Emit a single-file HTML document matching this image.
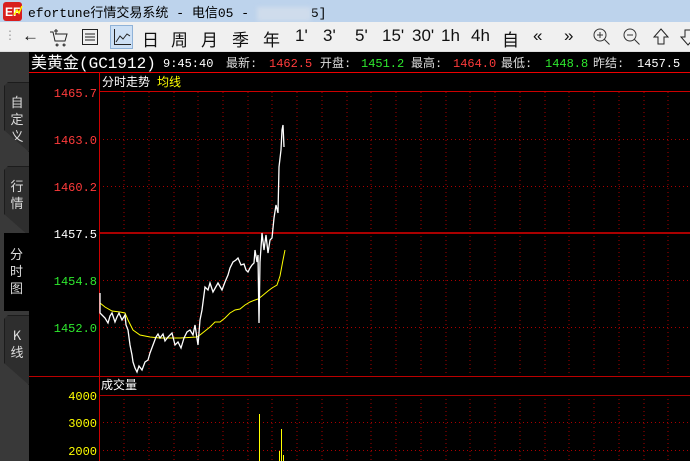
<!DOCTYPE html>
<html style="overflow:hidden;width:690px;height:461px"><head><meta charset="utf-8"><style>
*{margin:0;padding:0;box-sizing:border-box}
body{width:690px;height:461px;overflow:hidden;background:#000;font-family:"Liberation Mono","Noto Sans CJK SC",monospace;position:relative}
#title{position:absolute;left:0;top:0;width:690px;height:22px;background:#bdd3ec;overflow:hidden}
#title .t{position:absolute;left:28px;top:2px;font-size:13px;color:#000;white-space:nowrap}
#tb{position:absolute;left:0;top:22px;width:690px;height:30px;background:#f0f0f0;border-bottom:1px solid #ddd;overflow:hidden}
#tb span{position:absolute;top:4px;font-size:17px;color:#111;font-family:"Liberation Sans","Noto Sans CJK SC",sans-serif}
#side{position:absolute;left:0;top:52px;width:29px;height:409px;background:#393939;overflow:hidden}
.tab{position:absolute;left:4px;width:25px;background:#2e2e2e;border:1px solid #1c1c1c;border-right:none;color:#ddd;font-size:13px;text-align:center;line-height:17px;padding-top:10px;font-family:"Noto Sans CJK SC",sans-serif;clip-path:polygon(0 4px,4px 0,100% 0,100% 100%,0 calc(100% - 22px))}
.tab.act{background:#000;clip-path:none;border:none}
</style></head><body>
<div id="title">
<svg width="22" height="22" style="position:absolute;left:2px;top:1px"><rect x="1" y="1" width="19" height="19" rx="3" fill="#d81e1e"/><text x="3" y="15" font-size="12" fill="#fff" font-family="Liberation Sans" font-weight="bold">EF</text><path d="M12 14 L15 9 L17 12 L20 5" stroke="#ff0" stroke-width="1.5" fill="none"/></svg>
<div class="t">efortune行情交易系统 - 电信05 - <span style="display:inline-block;width:54px;height:14px;background:#cfdcec;filter:blur(2px);vertical-align:middle"></span>5]</div>
</div>
<div id="tb">
<span style="left:4px;top:6px;font-size:12px;color:#999">⋮</span>
<span style="left:22px">←</span>
<svg width="24" height="22" style="position:absolute;left:47px;top:4px" stroke="#222" fill="none"><path d="M3 6h3l2 9h10l2-7H8M10 18a1 1 0 1 0 .1 0M17 18a1 1 0 1 0 .1 0M9 3v5M7 5h4"/></svg>
<svg width="20" height="20" style="position:absolute;left:80px;top:5px" stroke="#222" fill="none"><rect x="2.5" y="2.5" width="15" height="15"/><path d="M5 7h10M5 10h10M5 13h10"/></svg>
<div style="position:absolute;left:110px;top:3px;width:23px;height:24px;background:#cde0f5;border:1px solid #8fb2d8"></div>
<svg width="20" height="20" style="position:absolute;left:112px;top:5px" stroke="#222" fill="none"><path d="M2.5 2v15.5H19M4 15l4-6 3 3 4-5 3 2"/></svg>
<span style="left:142px">日</span><span style="left:171px">周</span><span style="left:201px">月</span><span style="left:232px">季</span><span style="left:263px">年</span>
<span style="left:295px">1'</span><span style="left:323px">3'</span><span style="left:355px">5'</span><span style="left:382px">15'</span><span style="left:412px">30'</span><span style="left:441px">1h</span><span style="left:471px">4h</span><span style="left:502px">自</span>
<span style="left:533px">«</span><span style="left:564px">»</span>
<svg width="20" height="20" style="position:absolute;left:592px;top:5px" stroke="#333" fill="none"><circle cx="8" cy="8" r="6"/><path d="M12.5 12.5l5 5M5 8h6M8 5v6"/></svg>
<svg width="20" height="20" style="position:absolute;left:622px;top:5px" stroke="#333" fill="none"><circle cx="8" cy="8" r="6"/><path d="M12.5 12.5l5 5M5 8h6"/></svg>
<svg width="20" height="20" style="position:absolute;left:651px;top:5px" stroke="#222" fill="none"><path d="M10 2l7 8h-4v7H7v-7H3z"/></svg>
<svg width="20" height="20" style="position:absolute;left:678px;top:5px" stroke="#222" fill="none"><path d="M10 18l7-8h-4V3H7v7H3z"/></svg>
</div>
<div id="side">
<div class="tab" style="top:30px;height:70px">自<br>定<br>义</div>
<div class="tab" style="top:114px;height:70px">行<br>情</div>
<div class="tab act" style="top:181px;height:78px;padding-top:12px">分<br>时<br>图</div>
<div class="tab" style="top:263px;height:70px">K<br>线</div>
</div>
<svg width="661" height="409" style="position:absolute;left:29px;top:52px;display:block" font-family="Liberation Mono,Noto Sans CJK SC,monospace">
<g transform="translate(-29,-52)">
<g font-size="12">
<text x="31" y="68" font-size="16" fill="#fff">美黄金(GC1912)</text>
<text x="163" y="67" fill="#fff">9:45:40</text>
<text x="226" y="67" fill="#ddd">最新:</text><text x="269" y="67" fill="#ff3b3b">1462.5</text>
<text x="320" y="67" fill="#ddd">开盘:</text><text x="361" y="67" fill="#2ee82e">1451.2</text>
<text x="411" y="67" fill="#ddd">最高:</text><text x="453" y="67" fill="#ff3b3b">1464.0</text>
<text x="501" y="67" fill="#ddd">最低:</text><text x="545" y="67" fill="#2ee82e">1448.8</text>
<text x="593" y="67" fill="#ddd">昨结:</text><text x="637" y="67" fill="#fff">1457.5</text>
</g>
<line x1="29" y1="72.5" x2="690" y2="72.5" stroke="#e00" />
<text x="102" y="86" font-size="12" fill="#fff">分时走势</text><text x="157" y="86" font-size="12" fill="#ff0">均线</text>
<line x1="99" y1="91.5" x2="690" y2="91.5" stroke="#c00"/>
<g stroke="#a00" stroke-dasharray="1,3">
<line x1="99" y1="139.5" x2="690" y2="139.5"/><line x1="99" y1="186.5" x2="690" y2="186.5"/>
<line x1="99" y1="280.5" x2="690" y2="280.5"/><line x1="99" y1="327.5" x2="690" y2="327.5"/>
<line x1="99" y1="422.5" x2="690" y2="422.5"/><line x1="99" y1="450.5" x2="690" y2="450.5"/>
<g id="v">
<line x1="124" y1="92" x2="124" y2="376"/><line x1="149" y1="92" x2="149" y2="376"/><line x1="174" y1="92" x2="174" y2="376"/><line x1="198" y1="92" x2="198" y2="376"/><line x1="223" y1="92" x2="223" y2="376"/><line x1="248" y1="92" x2="248" y2="376"/><line x1="272" y1="92" x2="272" y2="376"/><line x1="297" y1="92" x2="297" y2="376"/><line x1="322" y1="92" x2="322" y2="376"/><line x1="347" y1="92" x2="347" y2="376"/><line x1="371" y1="92" x2="371" y2="376"/><line x1="396" y1="92" x2="396" y2="376"/><line x1="421" y1="92" x2="421" y2="376"/><line x1="446" y1="92" x2="446" y2="376"/><line x1="470" y1="92" x2="470" y2="376"/><line x1="495" y1="92" x2="495" y2="376"/><line x1="520" y1="92" x2="520" y2="376"/><line x1="545" y1="92" x2="545" y2="376"/><line x1="569" y1="92" x2="569" y2="376"/><line x1="594" y1="92" x2="594" y2="376"/><line x1="619" y1="92" x2="619" y2="376"/><line x1="644" y1="92" x2="644" y2="376"/><line x1="668" y1="92" x2="668" y2="376"/>
</g>
<use href="#v" transform="translate(0,303)"/>
</g>
<rect x="99" y="232" width="591" height="2" fill="#a00"/>
<line x1="29" y1="376.5" x2="690" y2="376.5" stroke="#b00"/>
<line x1="99" y1="395.5" x2="690" y2="395.5" stroke="#a00"/>
<line x1="99.5" y1="72" x2="99.5" y2="461" stroke="#c00"/>
<g font-size="12" text-anchor="end">
<text x="97" y="97" fill="#ff3b3b">1465.7</text><text x="97" y="144" fill="#ff3b3b">1463.0</text><text x="97" y="191" fill="#ff3b3b">1460.2</text>
<text x="97" y="238" fill="#fff">1457.5</text><text x="97" y="285" fill="#2ee82e">1454.8</text><text x="97" y="332" fill="#2ee82e">1452.0</text>
<text x="97" y="400" fill="#ff0">4000</text><text x="97" y="427" fill="#ff0">3000</text><text x="97" y="455" fill="#ff0">2000</text>
</g>
<text x="101" y="389" font-size="12" fill="#fff">成交量</text>
<polyline fill="none" stroke="#ff0" stroke-width="1" points="100,303 105,307 112,311 120,312 125,313 128,320 133,330 140,335 150,337 160,338 180,338 197,337 200,335 210,327 215,322 220,322 225,318 230,313 235,310 240,309 245,305 250,302 255,300 258,299 262,296 268,291 272,288 277,285 280,276 283,260 285,250"/>
<polyline fill="none" stroke="#fff" stroke-width="1.3" points="100,293 100,313 103,316 105,318 108,323 110,316 112,313 115,322 117,317 119,313 122,320 125,315 126,325 128,330 130,345 132,355 133,362 135,368 137,372 139,366 142,370 145,362 148,360 150,353 153,345 156,337 158,334 160,338 163,334 165,341 168,337 172,333 175,345 178,342 181,348 184,338 187,332 190,330 193,335 195,325 198,345 200,320 202,310 205,287 208,290 210,283 213,292 218,283 222,290 225,282 228,275 230,268 233,262 236,260 238,258 241,265 244,264 246,270 248,272 250,268 252,265 254,263 255,250 257,262 258,255 259,323 260,262 262,233 264,250 266,235 268,253 270,240 272,238 274,218 276,205 278,213 279,167 281,150 282,130 283,125 284,147"/>
<g stroke="#ff0"><line x1="259.5" y1="414" x2="259.5" y2="461"/><line x1="281.5" y1="429" x2="281.5" y2="461"/><line x1="279.5" y1="451" x2="279.5" y2="461"/><line x1="283.5" y1="455" x2="283.5" y2="461"/></g>
</g>
</svg>
</body></html>
